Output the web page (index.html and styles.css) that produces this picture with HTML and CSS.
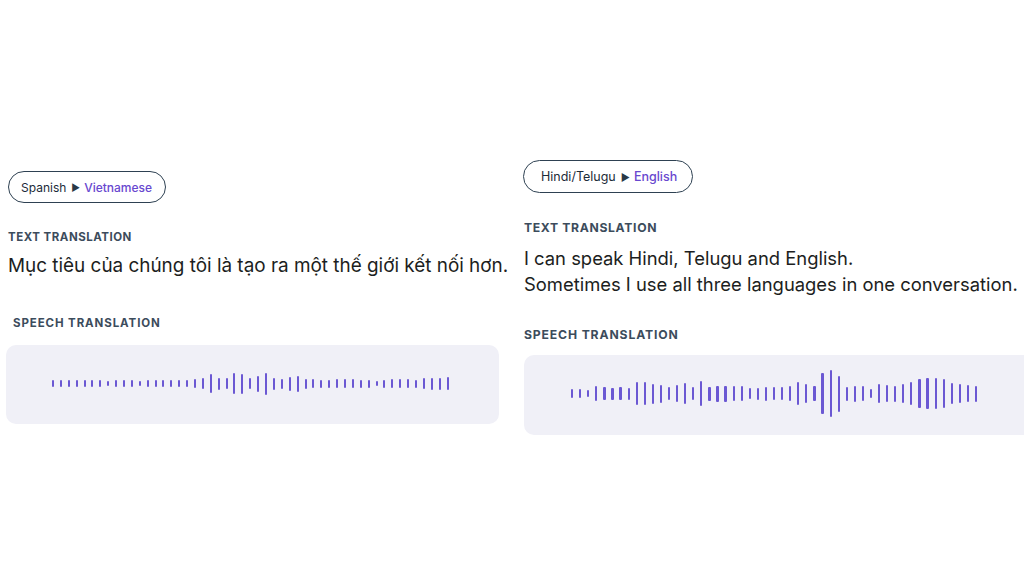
FILE: index.html
```html
<!DOCTYPE html>
<html lang="vi">
<head>
<meta charset="utf-8">
<title>Translation demo</title>
<link rel="stylesheet" href="styles.css">
</head>
<body>
<main class="stage">
  <section class="panel panel-left">
    <div class="pill pill-left"><span class="src">Spanish</span><span class="arrow">&#9654;</span><span class="dst">Vietnamese</span></div>
    <h3 class="label label-text">TEXT TRANSLATION</h3>
    <p class="sentence">Mục tiêu của chúng tôi là tạo ra một thế giới kết nối hơn.</p>
    <h3 class="label label-speech">SPEECH TRANSLATION</h3>
    <div class="wave-box">
      <div class="wave">
        <i style="height:7px"></i><i style="height:7px"></i><i style="height:7px"></i><i style="height:7px"></i><i style="height:7px"></i><i style="height:7px"></i><i style="height:7px"></i><i style="height:5px"></i><i style="height:7px"></i><i style="height:7px"></i><i style="height:7px"></i><i style="height:5px"></i><i style="height:7px"></i><i style="height:7px"></i><i style="height:7px"></i><i style="height:7px"></i><i style="height:7px"></i><i style="height:7px"></i><i style="height:9px"></i><i style="height:11px"></i><i style="height:19px"></i><i style="height:12px"></i><i style="height:11px"></i><i style="height:21px"></i><i style="height:20px"></i><i style="height:11px"></i><i style="height:16px"></i><i style="height:22px"></i><i style="height:12px"></i><i style="height:10px"></i><i style="height:14px"></i><i style="height:16px"></i><i style="height:10px"></i><i style="height:9px"></i><i style="height:8px"></i><i style="height:8px"></i><i style="height:9px"></i><i style="height:9px"></i><i style="height:9px"></i><i style="height:8px"></i><i style="height:8px"></i><i style="height:5px"></i><i style="height:8px"></i><i style="height:9px"></i><i style="height:9px"></i><i style="height:9px"></i><i style="height:8px"></i><i style="height:11px"></i><i style="height:12px"></i><i style="height:12px"></i><i style="height:13px"></i>
      </div>
    </div>
  </section>
  <section class="panel panel-right">
    <div class="pill pill-right"><span class="src">Hindi/Telugu</span><span class="arrow">&#9654;</span><span class="dst">English</span></div>
    <h3 class="label label-text">TEXT TRANSLATION</h3>
    <p class="sentence">I can speak Hindi, Telugu and English.<br>Sometimes I use all three languages in one conversation.</p>
    <h3 class="label label-speech">SPEECH TRANSLATION</h3>
    <div class="wave-box">
      <div class="wave">
        <i style="height:9px"></i><i style="height:9px"></i><i style="height:7px"></i><i style="height:15px"></i><i style="height:13px"></i><i style="height:12px"></i><i style="height:13px"></i><i style="height:12px"></i><i style="height:23px"></i><i style="height:23px"></i><i style="height:20px"></i><i style="height:18px"></i><i style="height:13px"></i><i style="height:17px"></i><i style="height:21px"></i><i style="height:13px"></i><i style="height:25px"></i><i style="height:14px"></i><i style="height:16px"></i><i style="height:16px"></i><i style="height:15px"></i><i style="height:15px"></i><i style="height:11px"></i><i style="height:12px"></i><i style="height:14px"></i><i style="height:13px"></i><i style="height:13px"></i><i style="height:15px"></i><i style="height:23px"></i><i style="height:19px"></i><i style="height:15px"></i><i style="height:41px"></i><i style="height:47px"></i><i style="height:36px"></i><i style="height:14px"></i><i style="height:16px"></i><i style="height:15px"></i><i style="height:9px"></i><i style="height:19px"></i><i style="height:17px"></i><i style="height:16px"></i><i style="height:19px"></i><i style="height:23px"></i><i style="height:29px"></i><i style="height:31px"></i><i style="height:31px"></i><i style="height:29px"></i><i style="height:21px"></i><i style="height:19px"></i><i style="height:17px"></i><i style="height:16px"></i>
      </div>
    </div>
  </section>
</main>
</body>
</html>
```
FILE: styles.css
```css
* { box-sizing: border-box; }
html, body {
  margin: 0;
  padding: 0;
  background: #ffffff;
  width: 1024px;
  height: 576px;
  overflow: hidden;
}
body {
  font-family: "Inter", "Noto Sans", "Liberation Sans", sans-serif;
  color: #1c1e21;
}
.stage {
  display: flex;
  align-items: flex-start;
  width: 1024px;
  height: 576px;
}
.panel {
  display: flex;
  flex-direction: column;
  align-items: flex-start;
}
.panel-left {
  width: 517px;
  padding: 171px 0 0 6px;
}
.panel-right {
  flex: 1;
  min-width: 0;
  padding: 160px 0 0 6px;
}

.pill {
  display: inline-flex;
  align-items: center;
  border: 1.5px solid #2e4152;
  border-radius: 999px;
  color: #1c2b39;
  white-space: nowrap;
}
.pill .arrow {
  font-size: 0.8em;
  color: #2a3846;
  margin: 0 4px 0 5px;
}
.pill .dst {
  color: #6848cf;
  font-weight: 500;
}
.pill-left {
  height: 32px;
  margin-left: 2px;
  padding: 0 13px 0 12px;
  font-size: 12px;
}
.pill-right {
  height: 33px;
  padding: 0 15px 0 17px;
  font-size: 12.5px;
}

.label {
  margin: 0;
  font-weight: 700;
  font-size: 11.5px;
  line-height: 14px;
  letter-spacing: 0.5px;
  color: #3c4c5c;
}
.label-speech { letter-spacing: 0.9px; }
.sentence {
  margin: 0;
  font-size: 19px;
  line-height: 26px;
  color: #1c1e21;
  white-space: nowrap;
}

.panel-left .label-text { margin: 27px 0 0 2px; }
.panel-left .sentence { margin: 9px 0 0 2px; font-size: 18.9px; }
.panel-left .label-speech { margin: 37px 0 0 7px; }
.panel-right .label-text { margin: 28px 0 0 1px; font-size: 12.2px; letter-spacing: 0.65px; }
.panel-right .sentence { margin: 10px 0 0 1px; font-size: 18.4px; }
.panel-right .label-speech { margin: 31px 0 0 1px; font-size: 12.2px; letter-spacing: 0.85px; }

.wave-box {
  display: flex;
  align-items: center;
  background: #f0f0f7;
  border-radius: 10px;
}
.panel-left .wave-box {
  margin-top: 15px;
  width: 493px;
  height: 79px;
  padding-left: 46px;
}
.panel-right .wave-box {
  margin-top: 13px;
  margin-left: 1px;
  width: 520px;
  height: 80px;
  padding-left: 47px;
  border-radius: 10px 0 0 10px;
}
.wave {
  display: flex;
  align-items: center;
}
.wave i {
  display: block;
  width: 2px;
  border-radius: 1px;
  background: #6b58d3;
}
.panel-left .wave { gap: 5.9px; margin-top: -2px; }
.panel-right .wave { gap: 5.9px; margin-top: -3px; }
.panel-right .wave i { width: 2.2px; }
```
